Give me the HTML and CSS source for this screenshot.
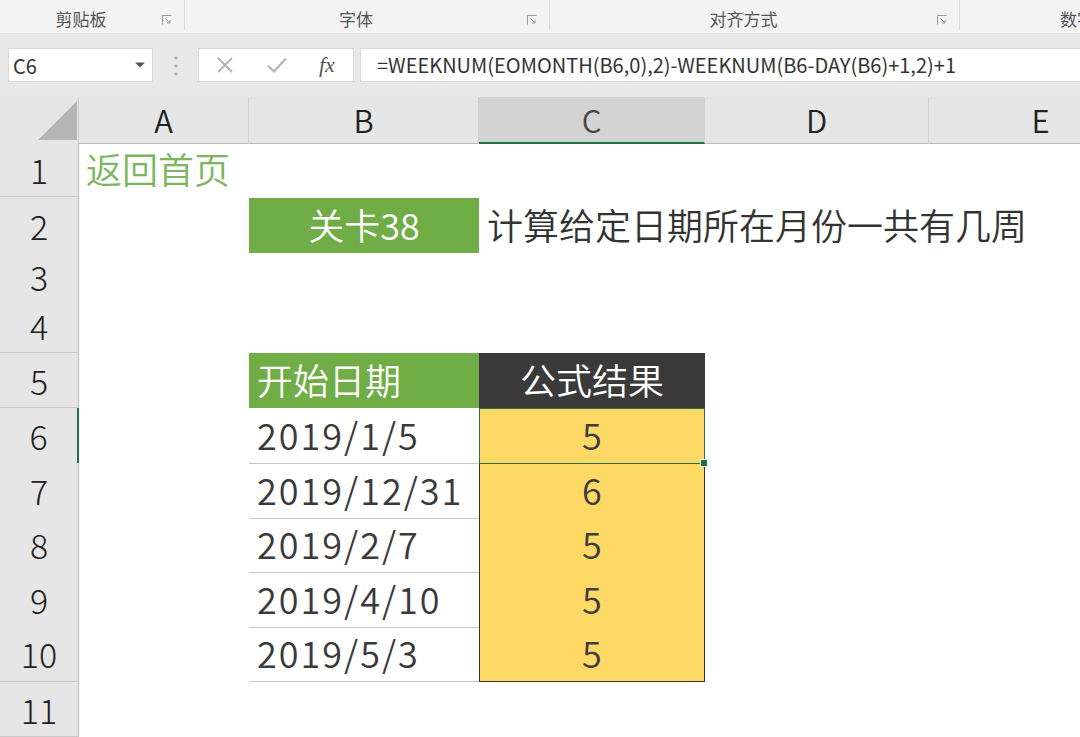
FILE: index.html
```html
<!DOCTYPE html>
<html>
<head>
    <meta charset="utf-8">
    <title>关卡38 - 计算给定日期所在月份一共有几周</title>
    <link rel="stylesheet" href="styles.css">
</head>
<body>
    <div class="ribbon">
        <div class="group" style="width: 185px"><span class="label">剪贴板</span><span class="launch"><svg width="10" height="10" viewBox="0 0 10 10"><path d="M0.5 9.5V0.5H9.5" fill="none" stroke="#9a9a9a"/><path d="M3.5 3.5L8 8M8 5V8H5" fill="none" stroke="#9a9a9a"/></svg></span></div>
        <div class="group" style="width: 365px"><span class="label">字体</span><span class="launch"><svg width="10" height="10" viewBox="0 0 10 10"><path d="M0.5 9.5V0.5H9.5" fill="none" stroke="#9a9a9a"/><path d="M3.5 3.5L8 8M8 5V8H5" fill="none" stroke="#9a9a9a"/></svg></span></div>
        <div class="group" style="width: 410px"><span class="label">对齐方式</span><span class="launch"><svg width="10" height="10" viewBox="0 0 10 10"><path d="M0.5 9.5V0.5H9.5" fill="none" stroke="#9a9a9a"/><path d="M3.5 3.5L8 8M8 5V8H5" fill="none" stroke="#9a9a9a"/></svg></span></div>
        <div class="group last"><span class="label num">数字</span></div>
    </div>

    <div class="fbar">
        <div class="namebox">
            <span>C6</span>
            <svg width="12" height="8" viewBox="0 0 12 8"><path d="M1 1.5H11L6 6.5Z" fill="#555"/></svg>
        </div>
        <div class="grip">
            <svg width="6" height="22" viewBox="0 0 6 22"><circle cx="3" cy="3" r="1.6" fill="#a8a8a8"/><circle cx="3" cy="11" r="1.6" fill="#a8a8a8"/><circle cx="3" cy="19" r="1.6" fill="#a8a8a8"/></svg>
        </div>
        <div class="fbtns">
            <svg class="cancel" width="18" height="18" viewBox="0 0 18 18"><path d="M2 2L16 16M16 2L2 16" stroke="#b4b4b4" stroke-width="1.8"/></svg>
            <svg class="enter" width="22" height="18" viewBox="0 0 22 18"><path d="M2 9.5L8 15.5L20 2.5" fill="none" stroke="#b4b4b4" stroke-width="2.2"/></svg>
            <span class="fx">fx</span>
        </div>
        <div class="formula">=WEEKNUM(EOMONTH(B6,0),2)-WEEKNUM(B6-DAY(B6)+1,2)+1</div>
    </div>

    <div class="sheet">
        <div class="row head">
            <div class="corner"><svg width="79" height="45" viewBox="0 0 79 45"><path d="M38 43L77 4V43Z" fill="#b5b5b5"/></svg></div>
            <div class="colhead">A</div>
            <div class="colhead">B</div>
            <div class="colhead selected">C</div>
            <div class="colhead">D</div>
            <div class="colhead">E</div>
        </div>

        <div class="row" style="height: 55px">
            <div class="rowhead">1</div>
            <div class="cell link">返回首页</div>
            <div class="cell"></div><div class="cell"></div><div class="cell"></div><div class="cell"></div>
        </div>

        <div class="row" style="height: 55px">
            <div class="rowhead">2</div>
            <div class="cell"></div>
            <div class="cell level">关卡38</div>
            <div class="cell title">计算给定日期所在月份一共有几周</div>
            <div class="cell"></div><div class="cell"></div>
        </div>

        <div class="row" style="height: 47px">
            <div class="rowhead">3</div>
            <div class="cell"></div><div class="cell"></div><div class="cell"></div><div class="cell"></div><div class="cell"></div>
        </div>

        <div class="row" style="height: 54px">
            <div class="rowhead">4</div>
            <div class="cell"></div><div class="cell"></div><div class="cell"></div><div class="cell"></div><div class="cell"></div>
        </div>

        <div class="row" style="height: 55px">
            <div class="rowhead">5</div>
            <div class="cell"></div>
            <div class="cell th-green">开始日期</div>
            <div class="cell th-dark">公式结果</div>
            <div class="cell"></div><div class="cell"></div>
        </div>

        <div class="row" style="height: 55px">
            <div class="rowhead active">6</div>
            <div class="cell"></div>
            <div class="cell date">2019/1/5</div>
            <div class="cell result current">5</div>
            <div class="cell"></div><div class="cell"></div>
        </div>

        <div class="row" style="height: 54px">
            <div class="rowhead">7</div>
            <div class="cell"></div>
            <div class="cell date">2019/12/31</div>
            <div class="cell result">6</div>
            <div class="cell"></div><div class="cell"></div>
        </div>

        <div class="row" style="height: 55px">
            <div class="rowhead">8</div>
            <div class="cell"></div>
            <div class="cell date">2019/2/7</div>
            <div class="cell result">5</div>
            <div class="cell"></div><div class="cell"></div>
        </div>

        <div class="row" style="height: 54px">
            <div class="rowhead">9</div>
            <div class="cell"></div>
            <div class="cell date">2019/4/10</div>
            <div class="cell result">5</div>
            <div class="cell"></div><div class="cell"></div>
        </div>

        <div class="row" style="height: 56px">
            <div class="rowhead">10</div>
            <div class="cell"></div>
            <div class="cell date">2019/5/3</div>
            <div class="cell result last">5</div>
            <div class="cell"></div><div class="cell"></div>
        </div>

        <div class="row" style="height: 55px">
            <div class="rowhead">11</div>
            <div class="cell"></div><div class="cell"></div><div class="cell"></div><div class="cell"></div><div class="cell"></div>
        </div>
    </div>
</body>
</html>
```

FILE: styles.css
```css
body {
    margin: 0;
    width: 1080px;
    height: 737px;
    overflow: hidden;
    background-color: #fff;
    font-family: "Noto Sans CJK SC", "Noto Sans", sans-serif;
    color: #333;
}

/* ribbon group labels */
.ribbon {
    display: flex;
    height: 34px;
    background-color: #f3f3f3;
    border-bottom: 1px solid #e2e2e2;
    box-sizing: border-box;
}

.group {
    display: flex;
    align-items: center;
    border-right: 1px solid #dadada;
    margin: 0 0 3px 0;
    padding-top: 8px;
    box-sizing: border-box;
    min-width: 0;
}

.group.last {
    flex: 1;
    border-right: none;
    overflow: hidden;
}

.label {
    flex: 1;
    text-align: center;
    font-size: 17px;
    color: #555;
    line-height: 22px;
    white-space: nowrap;
}

.label.num {
    text-align: left;
    padding-left: 100px;
}

.launch {
    width: 22px;
    display: flex;
    align-items: center;
    padding-top: 2px;
}

/* formula bar */
.fbar {
    display: flex;
    align-items: center;
    height: 63px;
    padding: 0 0 1px 8px;
    box-sizing: border-box;
    background-color: #e8e8e8;
}

.namebox {
    display: flex;
    align-items: center;
    justify-content: space-between;
    width: 145px;
    height: 34px;
    padding: 0 6px 0 4px;
    box-sizing: border-box;
    background-color: #fff;
    border: 1px solid #dadada;
    font-size: 20px;
    color: #333;
}

.grip {
    width: 45px;
    display: flex;
    justify-content: center;
    padding-top: 2px;
}

.fbtns {
    display: flex;
    align-items: center;
    width: 156px;
    height: 34px;
    padding-left: 17px;
    box-sizing: border-box;
    background-color: #fff;
    border: 1px solid #dadada;
}

.enter {
    margin-left: 32px;
}

.fx {
    font-family: "Liberation Serif", serif;
    font-style: italic;
    font-size: 22px;
    color: #555;
    margin-left: 31px;
}

.formula {
    flex: 1;
    height: 34px;
    line-height: 32px;
    margin-left: 6px;
    padding-left: 16px;
    box-sizing: border-box;
    background-color: #fff;
    border: 1px solid #dadada;
    border-right: none;
    font-size: 20px;
    color: #333;
    white-space: nowrap;
}

/* worksheet */
.sheet {
    overflow: hidden;
}

.row {
    display: grid;
    grid-template-columns: 79px 170px 230px 226px 224px 224px;
}

.head {
    height: 45px;
}

.corner {
    background-color: #e6e6e6;
    border-bottom: 1px solid #bdbdbd;
    border-right: 1px solid #cfcfcf;
    box-sizing: border-box;
}

.corner svg {
    display: block;
}

.colhead {
    background-color: #e6e6e6;
    border-right: 1px solid #d2d2d2;
    border-bottom: 1px solid #bdbdbd;
    box-sizing: border-box;
    text-align: center;
    font-size: 31px;
    font-weight: 350;
    line-height: 45px;
    color: #222;
}

.colhead.selected {
    background-color: #d3d3d3;
    border-bottom: 2px solid #217346;
    color: #444;
}

.rowhead {
    background-color: #e6e6e6;
    border-bottom: 1px solid #c9c9c9;
    border-right: 1px solid #bdbdbd;
    box-sizing: border-box;
    display: flex;
    align-items: center;
    justify-content: center;
    font-size: 34px;
    font-weight: 300;
    color: #222;
}

.rowhead.active {
    border-right: 2px solid #217346;
}

.cell {
    display: flex;
    align-items: center;
    padding: 0 0 3px 7px;
    box-sizing: border-box;
    font-size: 36px;
    font-weight: 350;
    white-space: nowrap;
    min-width: 0;
}

.link {
    color: #7cb660;
}

.level {
    justify-content: center;
    padding-left: 0;
    margin: 1px 0 1px 0;
    background-color: #70ad47;
    color: #fff;
}

.title {
    padding-left: 8px;
    color: #333;
    overflow: visible;
}

.th-green {
    padding-left: 8px;
    background-color: #70ad47;
    color: #fff;
}

.th-dark {
    justify-content: center;
    padding-left: 0;
    background-color: #3a3a3a;
    color: #fff;
}

.date {
    padding-left: 8px;
    letter-spacing: 2px;
    border-bottom: 1px solid #c6c6c6;
    color: #3a3a3a;
}

.result {
    justify-content: center;
    padding-left: 0;
    background-color: #ffd966;
    border-left: 1px solid #333;
    border-right: 1px solid #333;
    border-bottom: 1px solid #c9ae55;
    color: #3d3d3d;
}

.result.last {
    border-bottom: 1px solid #333;
}

.current {
    position: relative;
    border-bottom-color: #217346;
    border-left-color: #217346;
    border-right-color: #217346;
    box-shadow: inset 0 1px 0 #217346;
}

.current::after {
    content: "";
    position: absolute;
    right: -4px;
    bottom: -4px;
    width: 6px;
    height: 6px;
    background-color: #217346;
    border: 1px solid #fff;
}
```
